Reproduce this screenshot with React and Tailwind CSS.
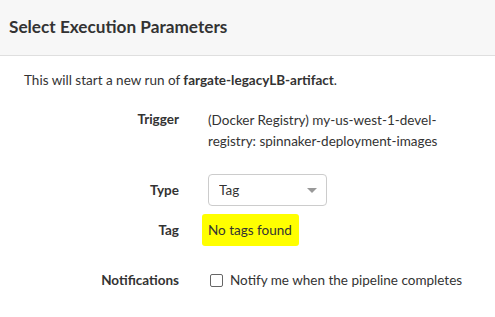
import { useState } from "react";

const Row = ({ label, className = "", labelClass = "", children }) => (
    <div className={`flex ${className}`}>
        <div className={`w-[179px] shrink-0 text-right font-bold ${labelClass}`}>{label}</div>
        <div className="pl-[29px] flex-1">{children}</div>
    </div>
);

const App = () => {
    const [notify, setNotify] = useState(false);
    const [type, setType] = useState("Tag");

    return (
        <div className="w-[495px] h-[317px] bg-white text-[#333] overflow-hidden" style={{ fontFamily: "Lato, 'Liberation Sans', sans-serif" }}>
            <div className="h-[56px] bg-[#f7f7f7] border-b border-[#dfdfdf] flex items-center px-[9px]">
                <h3 className="text-[17.2px] font-bold text-[#333] pb-[1px]">Select Execution Parameters</h3>
            </div>

            <div className="text-[13.5px] leading-[21px]">
                <p className="pl-[24px] pt-[14px]">
                    This will start a new run of <span className="font-bold">fargate-legacyLB-artifact</span>.
                </p>

                <Row label="Trigger" className="mt-[19px]" labelClass="-mt-[1px]">
                    <div className="w-[250px]">(Docker Registry) my-us-west-1-devel-registry: spinnaker-deployment-images</div>
                </Row>

                <Row label="Type" className="mt-[22px] items-center">
                    <div className="relative w-[119px] h-[32px]">
                        <select
                            value={type}
                            onChange={(e) => setType(e.target.value)}
                            className="appearance-none w-full h-full border border-[#ccc] rounded-[4px] bg-white pl-[10px] text-[13.5px] text-[#333] focus:outline-none"
                        >
                            <option>Tag</option>
                            <option>Digest</option>
                        </select>
                        <div className="pointer-events-none absolute right-[10px] top-[14px] w-0 h-0 border-l-[5px] border-r-[5px] border-t-[5px] border-l-transparent border-r-transparent border-t-[#999]" />
                    </div>
                </Row>

                <Row label="Tag" className="mt-[8px] items-center">
                    <span className="inline-block -ml-[6px] bg-[#ffff00] pl-[6px] pr-[7px] pt-[6px] pb-[5px] rounded-[3px]">No tags found</span>
                </Row>

                <Row label="Notifications" className="mt-[24px] items-center" labelClass="-mr-[3px]">
                    <label className="flex items-center gap-[7px] pl-[5px] cursor-pointer">
                        <input
                            type="checkbox"
                            checked={notify}
                            onChange={(e) => setNotify(e.target.checked)}
                            className="appearance-none w-[13px] h-[13px] border border-[#666] rounded-[2px] bg-white checked:bg-blue-500"
                        />
                        <span>Notify me when the pipeline completes</span>
                    </label>
                </Row>
            </div>
        </div>
    );
};

export default App;
